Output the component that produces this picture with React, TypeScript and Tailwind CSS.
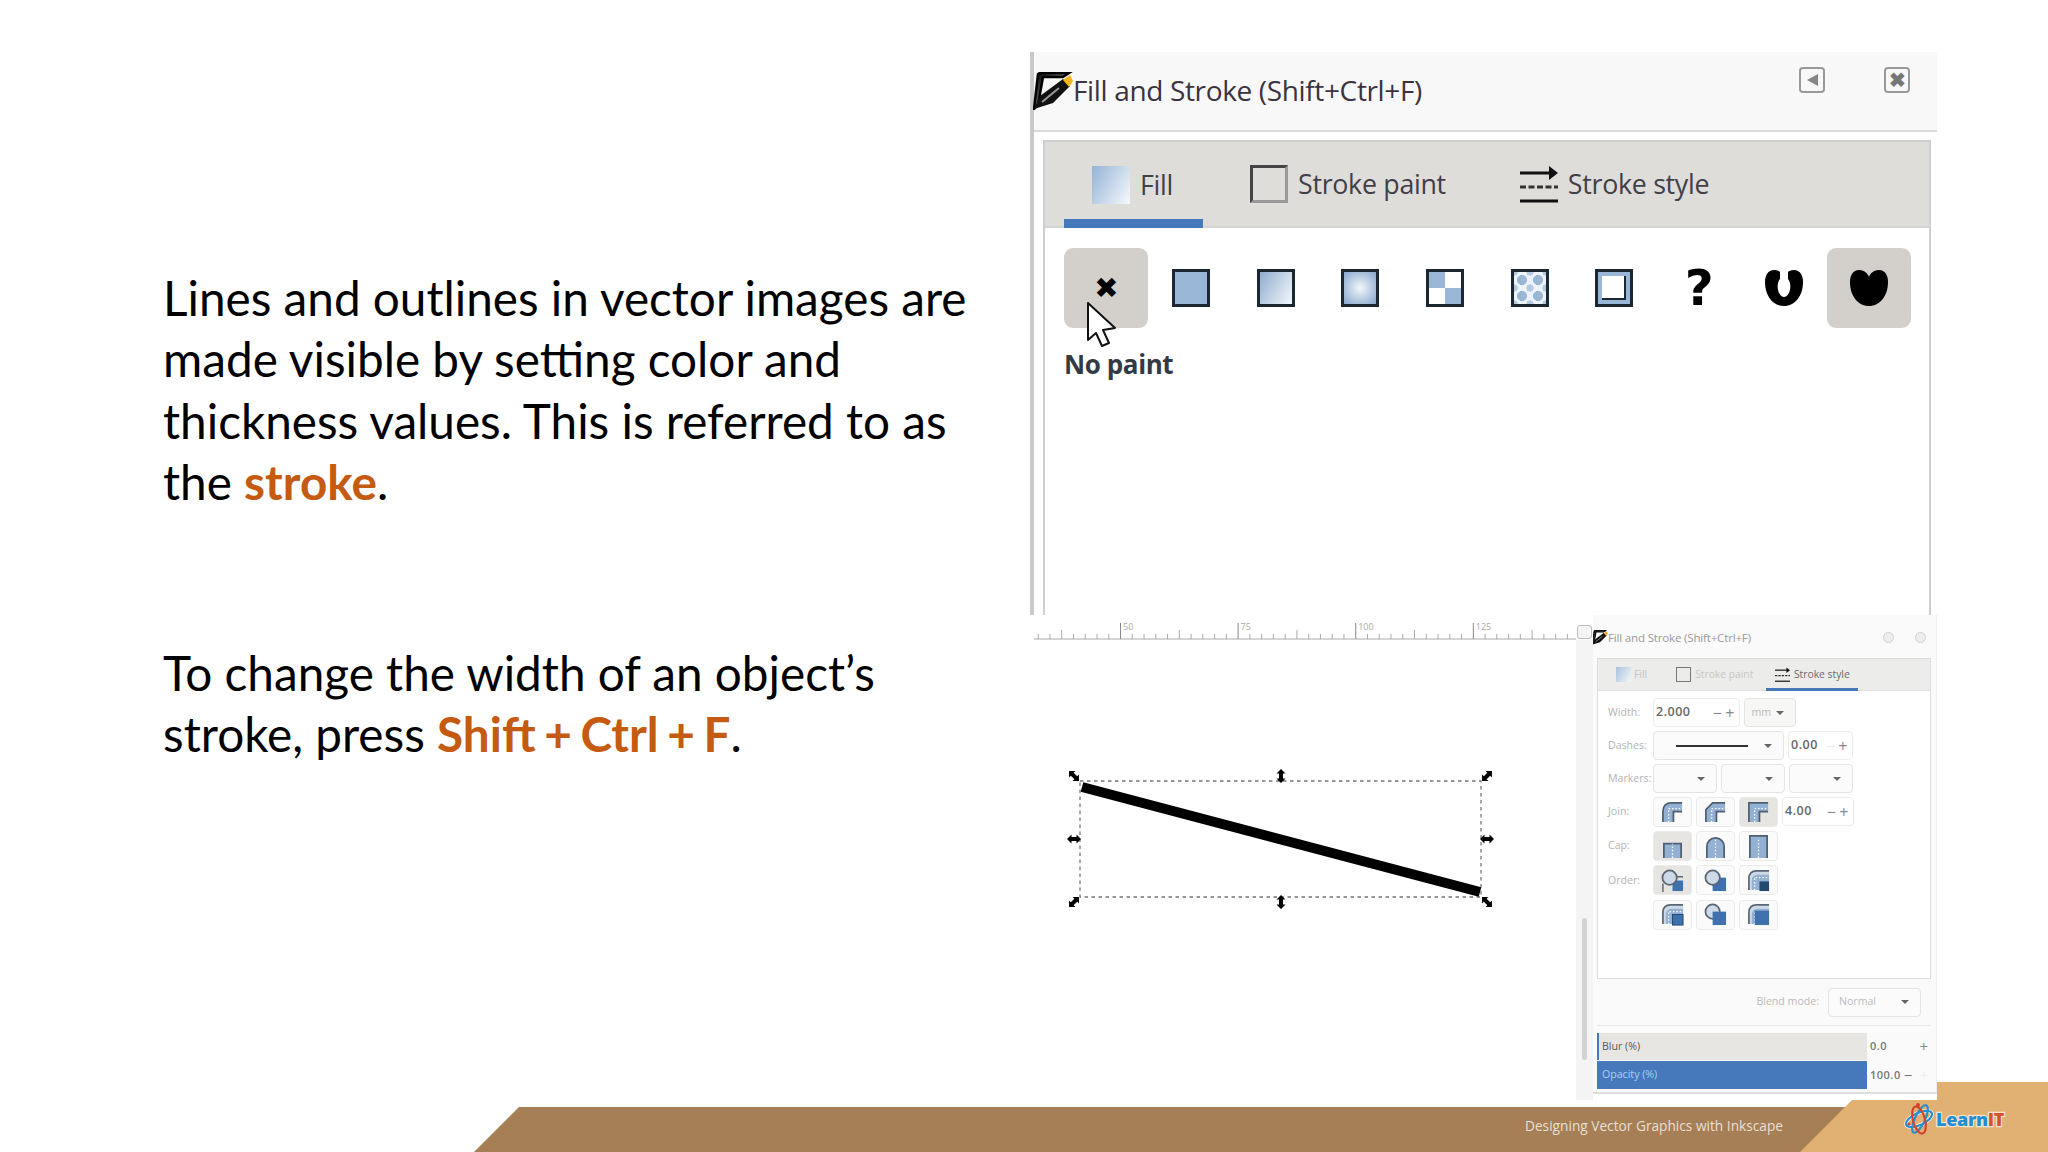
import React from "react";

const sans = "font-['Open_Sans','Noto_Sans',sans-serif]";

function PenIcon({ className }: { className: string }) {
  return (
    <svg viewBox="0 0 40 38" className={className}>
      <defs>
        <linearGradient id="pg" x1="0" y1="0" x2="1" y2="1">
          <stop offset="0" stopColor="#000" />
          <stop offset="0.6" stopColor="#777" />
          <stop offset="1" stopColor="#eee" />
        </linearGradient>
      </defs>
      <path d="M7 1H36L30 5H10L5 33 1 37 5 2Z" fill="url(#pg)" stroke="#000" strokeWidth="2.5" />
      <path d="M1 37 L7 24 L30 7 L37 14 L20 31Z" fill="#111" />
      <path d="M9 30 L26 16" stroke="#999" strokeWidth="2" />
      <path d="M30 8 L37 3 L40 9 L36 15Z" fill="#f2b21c" />
    </svg>
  );
}

function Heart({ open }: { open?: boolean }) {
  return (
    <svg viewBox="0 0 38 38" className="w-[38px] h-[38px]">
      <path d="M9 1C15 1 18 5 19 8C20 5 23 1 29 1C35 1 38 6 38 13C38 27 30 37 19 37C8 37 0 27 0 13C0 6 3 1 9 1Z" fill="#000" />
      {open && <path d="M15 0H23L23 10C27 14 26 27 19 28C12 27 11 14 15 10Z" fill="#fff" />}
    </svg>
  );
}

function Swatch({ kind }: { kind: string }) {
  const box = "w-[38px] h-[38px] border-[3px] border-[#1b2733] ";
  if (kind === "flat") return <div className={box + "bg-[#9ab6d6]"} />;
  if (kind === "linear") return <div className={box + "bg-[linear-gradient(120deg,#8fadd0,#f4f7fb)]"} />;
  if (kind === "radial") return <div className={box + "bg-[radial-gradient(circle,#f2f6fb,#86a6cc)]"} />;
  if (kind === "mesh")
    return (
      <div className={box + "grid grid-cols-2 grid-rows-2 bg-white"}>
        <div className="bg-[#9ab6d6]" />
        <div />
        <div />
        <div className="bg-[#9ab6d6]" />
      </div>
    );
  if (kind === "pattern")
    return (
      <div className={box + "bg-[#eef3f9] bg-[radial-gradient(circle,#9ab6d6_42%,transparent_46%),radial-gradient(circle,#b4c9e1_30%,transparent_34%)] bg-[length:16px_16px] bg-[position:0_0,8px_8px]"} />
    );
  return (
    <div className={box + "bg-[#9ab6d6] p-[4px]"}>
      <div className="w-full h-full bg-white border-r-2 border-b-2 border-[#1b2733]" />
    </div>
  );
}

function Cell({ children, active }: { children: React.ReactNode; active?: boolean }) {
  return (
    <div className="w-[84.7px] h-[80px] flex items-center justify-center">
      <div className={"w-[84px] h-[80px] rounded-[9px] flex items-center justify-center " + (active ? "bg-[#d3d0cc]" : "")}>{children}</div>
    </div>
  );
}

function StrokeStyleIcon({ className }: { className: string }) {
  return (
    <svg viewBox="0 0 38 38" className={className}>
      <path d="M0 8H30" stroke="#111" strokeWidth="3" />
      <path d="M29 1L38 8L29 15Z" fill="#111" />
      <path d="M0 22H38" stroke="#333" strokeWidth="3" strokeDasharray="6 2.5" />
      <path d="M0 36H38" stroke="#111" strokeWidth="3" />
    </svg>
  );
}

function JoinIcon({ kind }: { kind: string }) {
  const o =
    kind === "round" ? "M2 22V11Q2 2 11 2H22" : kind === "bevel" ? "M2 22V9L9 2H22" : "M2 22V2H22";
  return (
    <svg viewBox="0 0 24 24" className="w-[23px] h-[23px]">
      <path d={o + "V11H13V22Z"} fill="#94b0d2" />
      <path d={o + "M22 11H13V22"} fill="none" stroke="#4e5f72" strokeWidth="1.8" />
      <path d="M8 22V8H22" fill="none" stroke="#fff" strokeWidth="1.4" strokeDasharray="1.5 2" />
    </svg>
  );
}

function CapIcon({ kind }: { kind: string }) {
  const o = kind === "butt" ? "M3 24V9H21V24" : kind === "round" ? "M3 24V12A9 9 0 0 1 21 12V24" : "M3 24V1H21V24";
  return (
    <svg viewBox="0 0 24 24" className="w-[23px] h-[23px]">
      <path d={o + "Z"} fill="#94b0d2" />
      <path d={o} fill="none" stroke="#4e5f72" strokeWidth="1.8" />
      <path d={kind === "butt" ? "M12 24V9" : "M12 24V5"} stroke="#fff" strokeWidth="1.4" strokeDasharray="1.5 2" />
    </svg>
  );
}

function OrderIcon({ kind }: { kind: number }) {
  const circle = <circle cx="9" cy="9" r="7.5" fill="#ced9e7" stroke="#5a6673" strokeWidth="1.8" />;
  const rounded = (
    <>
      <path d="M2 22V10Q2 2 10 2H23V22Z" fill="#ced9e7" />
      <path d="M2 22V10Q2 2 10 2H23" fill="none" stroke="#5a6673" strokeWidth="1.8" />
      <path d="M5 22V12Q5 6 12 6H23V22Z" fill="#94b0d2" />
      <path d="M8 22V9H23" fill="none" stroke="#fff" strokeWidth="1.3" strokeDasharray="1.5 2" />
    </>
  );
  return (
    <svg viewBox="0 0 24 24" className="w-[23px] h-[23px]">
      {kind === 0 && (
        <>
          <path d="M2 15V24M14 8H23" stroke="#5a6673" strokeWidth="1.5" />
          <rect x="12" y="12" width="11" height="11" fill="#3f72ad" />
          {circle}
        </>
      )}
      {kind === 1 && (
        <>
          <rect x="9" y="9" width="14" height="14" fill="#3f72ad" />
          {circle}
        </>
      )}
      {kind === 2 && (
        <>
          {rounded}
          <rect x="13" y="13" width="10" height="10" fill="#24486f" />
        </>
      )}
      {kind === 3 && (
        <>
          {rounded}
          <rect x="12" y="12" width="11" height="11" fill="#3f72ad" stroke="#24486f" />
        </>
      )}
      {kind === 4 && (
        <>
          {circle}
          <rect x="9" y="9" width="14" height="14" fill="#3f72ad" />
        </>
      )}
      {kind === 5 && (
        <>
          {rounded}
          <rect x="8" y="8" width="15" height="15" fill="#3f72ad" />
        </>
      )}
    </svg>
  );
}

function Caret() {
  return <span className="w-0 h-0 border-x-[4px] border-x-transparent border-t-[4px] border-t-[#666]" />;
}

function Combo({ className, children }: { className: string; children?: React.ReactNode }) {
  return (
    <div className={"h-[29px] border border-[#e4e4e2] rounded-[4px] flex items-center justify-end pr-[11px] relative " + className}>
      {children}
      <Caret />
    </div>
  );
}

function Entry({ className, value, minus, plus }: { className: string; value: string; minus?: string; plus?: string }) {
  return (
    <div className={"h-[29px] border border-[#ececea] rounded-[4px] bg-white flex items-center justify-between pl-[2px] pr-[4px] text-[12.5px] tracking-[0.5px] text-[#666] font-semibold " + className}>
      <span>{value}</span>
      <span className="flex gap-[3px] text-[16px] font-normal leading-none">
        <span className={minus ?? "text-[#888]"}>−</span>
        <span className={plus ?? "text-[#888]"}>+</span>
      </span>
    </div>
  );
}

function ToggleBtn({ children, active }: { children: React.ReactNode; active?: boolean }) {
  return (
    <div className={"w-[39px] h-[30px] rounded-[4px] border border-[#ecebe9] flex items-center justify-center " + (active ? "bg-[#e6e5e2]" : "bg-[#fbfbfb]")}>{children}</div>
  );
}

function Handle({ x, y, rot }: { x: number; y: number; rot: number }) {
  return (
    <path
      transform={`translate(${x} ${y}) rotate(${rot})`}
      d="M0 -7L4.5 -2.5H2V2.5H4.5L0 7L-4.5 2.5H-2V-2.5H-4.5Z"
      fill="#000"
    />
  );
}

function Ruler() {
  const ticks = Array.from({ length: 47 }, (_, i) => i);
  const labels: [number, string][] = [[90, "50"], [207.6, "75"], [325.2, "100"], [442.8, "125"]];
  return (
    <svg viewBox="0 0 546 26" className="w-[546px] h-[26px] shrink-0">
      <path d="M4 24H546" stroke="#aaa" strokeWidth="1" />
      {ticks.map((i) => {
        const x = 8.2 + i * 11.76;
        const mod = (i + 3) % 10;
        const h = mod === 0 ? 16 : mod === 5 ? 9 : 5;
        return <path key={i} d={`M${x} 24V${24 - h}`} stroke={mod === 0 ? "#888" : "#aaa"} strokeWidth="1" />;
      })}
      {labels.map(([x, t]) => (
        <text key={t} x={x + 3} y="15" fontSize="9" fill="#aaa" fontFamily="Open Sans">
          {t}
        </text>
      ))}
    </svg>
  );
}

function Logo() {
  return (
    <div className="flex items-center">
      <svg viewBox="0 0 32 34" className="w-[32px] h-[34px]">
        <g fill="none" strokeWidth="2.2">
          <ellipse cx="15" cy="17" rx="14" ry="6" stroke="#fff" strokeWidth="3.6" transform="rotate(-25 15 17)" />
          <ellipse cx="15" cy="17" rx="14" ry="6" stroke="#2a8fd0" transform="rotate(-25 15 17)" />
          <ellipse cx="16" cy="17" rx="15" ry="5" stroke="#2a8fd0" transform="rotate(-65 16 17)" />
          <ellipse cx="15" cy="18" rx="6" ry="14" stroke="#d8412f" transform="rotate(-15 15 18)" />
        </g>
        <circle cx="14" cy="3" r="2" fill="#d8412f" />
        <circle cx="5" cy="22" r="1.6" fill="#d8412f" />
      </svg>
      <span className="text-[18px] font-extrabold tracking-[-0.3px] leading-none font-['Open_Sans',sans-serif] [-webkit-text-stroke:2.5px_#f3e2cc] [paint-order:stroke_fill] text-[#1f8fd2]">
        Learn<span className="text-[#d6512f]">IT</span>
      </span>
    </div>
  );
}

export default function App() {
  const fills = ["flat", "linear", "radial", "mesh", "pattern", "swatch"];
  return (
    <div className="relative w-[2048px] h-[1152px] overflow-hidden bg-white flex">
      {/* Footer */}
      <div className="absolute left-[474px] right-0 bottom-0 h-[45px] pb-[6px] bg-[#a67f57] [clip-path:polygon(45px_0,100%_0,100%_100%,0_100%)] flex items-center pl-[1051px]">
        <span className={sans + " text-[13.7px] text-[#e9dfd4]"}>Designing Vector Graphics with Inkscape</span>
      </div>
      <div className="absolute left-[1800px] right-0 bottom-0 h-[70px] bg-[#e0b173] [clip-path:polygon(70px_0,100%_0,100%_100%,0_100%)] flex items-start pl-[104px] pt-[20px]">
        <Logo />
      </div>

      {/* Slide text */}
      <div className="w-[1030px] pl-[163px] pt-[267px] flex flex-col gap-[129px] font-['Lato',sans-serif] text-[47.7px] leading-[61.4px] text-black">
        <p>
          Lines and outlines in vector images are
          <br />
          made visible by setting color and
          <br />
          thickness values. This is referred to as
          <br />
          the <b className="text-[#c55a11]">stroke</b>.
        </p>
        <p>
          To change the width of an object’s
          <br />
          stroke, press <b className="text-[#c55a11] [word-spacing:-3px]">Shift + Ctrl + F</b>.
        </p>
      </div>

      {/* Screenshots */}
      <div className="relative w-[907px] pt-[52px] flex flex-col">
        {/* Upper dialog */}
        <div className={"h-[563px] flex flex-col border-l-[4px] border-[#c9c9c9] bg-white " + sans}>
          <div className="h-[80px] shrink-0 bg-[#f8f8f8] border-b-2 border-[#dadada] flex items-center">
            <PenIcon className="w-[40px] h-[38px] -ml-[1px]" />
            <span className="text-[28px] tracking-[-0.35px] text-[#3b3340] -mt-[2px]">Fill and Stroke (Shift+Ctrl+F)</span>
            <div className="ml-auto flex items-center gap-[59px] pr-[27px] pb-[22px]">
              <div className="w-[26px] h-[26px] border-2 border-[#999] rounded-[4px] flex items-center justify-center">
                <span className="w-0 h-0 border-y-[6px] border-y-transparent border-r-[11px] border-r-[#888]" />
              </div>
              <div className="w-[26px] h-[26px] border-2 border-[#999] rounded-[4px] flex items-center justify-center text-[20px] leading-none font-bold text-[#777]">✖</div>
            </div>
          </div>
          <div className="ml-[9px] mr-[6px] mt-[8px] flex-1 flex flex-col border-x-2 border-t-2 border-[#cfcfcf]">
            <div className="h-[86px] shrink-0 bg-[#dfddda] border-b-2 border-[#d2d2d0] flex pl-[19px] text-[#3f4048] text-[26.8px] tracking-[-0.3px]">
              <div className="w-[139px] h-[86px] -mb-[2px] border-b-[9px] border-t-[9px] border-t-transparent border-[#4679bb] flex items-center pl-[28px] gap-[10px]">
                <div className="w-[38px] h-[38px] bg-[linear-gradient(120deg,#94b2d6,#f6f9fc)]" />
                <span>Fill</span>
              </div>
              <div className="ml-[47px] flex items-center gap-[10px]">
                <div className="w-[38px] h-[38px] border-[3px] border-[#444] bg-[#dfddda] [border-bottom-color:#999] [border-right-color:#999]" />
                <span>Stroke paint</span>
              </div>
              <div className="ml-[74px] flex items-center gap-[10px]">
                <StrokeStyleIcon className="w-[38px] h-[38px]" />
                <span>Stroke style</span>
              </div>
            </div>
            <div className="relative flex-1 bg-white pl-[19px] pt-[20px]">
              <div className="flex">
                <Cell active>
                  <span className="text-[29px] leading-none font-bold font-['DejaVu_Sans',sans-serif] text-black">✖</span>
                </Cell>
                {fills.map((f) => (
                  <Cell key={f}>
                    <Swatch kind={f} />
                  </Cell>
                ))}
                <Cell>
                  <span className="text-[50px] leading-none font-bold font-['DejaVu_Sans',sans-serif] text-black">?</span>
                </Cell>
                <Cell>
                  <Heart open />
                </Cell>
                <Cell active>
                  <Heart />
                </Cell>
              </div>
              <p className="mt-[19px] text-[26px] leading-[34px] font-bold tracking-[-0.4px] text-[#333a44]">No paint</p>
              <svg viewBox="0 0 30 46" className="absolute left-[42px] top-[74px] w-[30px] h-[46px]">
                <path d="M1 1V38L9 31L15 44L22 41L16 28L28 26Z" fill="#fff" stroke="#111" strokeWidth="2" strokeLinejoin="round" />
              </svg>
            </div>
          </div>
        </div>

        {/* Lower picture */}
        <div className="h-[485px] flex bg-white">
          <div className="w-[546px] shrink-0 flex flex-col overflow-hidden">
            <Ruler />
            <svg viewBox="0 0 546 459" className="w-[546px] h-[459px]">
              <rect x="50" y="140" width="401" height="116" fill="none" stroke="#777" strokeWidth="1.3" strokeDasharray="3.5 3.5" />
              <path d="M52 146L450 251" stroke="#000" strokeWidth="10" />
              <Handle x={44} y={135} rot={-45} />
              <Handle x={457} y={135} rot={45} />
              <Handle x={44} y={261} rot={45} />
              <Handle x={457} y={261} rot={-45} />
              <Handle x={251} y={135} rot={0} />
              <Handle x={251} y={261} rot={0} />
              <Handle x={44} y={198} rot={90} />
              <Handle x={457} y={198} rot={90} />
            </svg>
          </div>
          <div className="relative w-[17px] shrink-0 bg-[linear-gradient(#fff_25px,#f4f4f4_25px)] flex flex-col items-center pt-[303px]">
            <div className="absolute left-[1px] top-[10px] w-[15px] h-[14px] border border-[#bbb] rounded-[3px] bg-[#f4f4f4]" />
            <div className="w-[5px] h-[142px] bg-[#d2d2d2] rounded-full" />
          </div>
          <div className="flex-1 bg-[#fafafa] flex flex-col border-b-2 border-[#dedede] border-r border-r-[#ededed] mb-[6px] pl-[4px] pr-[5px]">
            <div className="h-[43px] shrink-0 flex items-center -ml-[5px] pt-[2px]">
              <PenIcon className="w-[16px] h-[15px]" />
              <span className={sans + " text-[11.6px] tracking-[-0.2px] text-[#9a9a9a]"}>Fill and Stroke (Shift+Ctrl+F)</span>
              <div className="ml-auto flex gap-[21px] pr-[5px]">
                <span className="w-[11px] h-[11px] rounded-full border border-[#cfcfcf] bg-[#eee]" />
                <span className="w-[11px] h-[11px] rounded-full border border-[#cfcfcf] bg-[#eee]" />
              </div>
            </div>
            <div className={"h-[321px] shrink-0 border border-[#dcdcdc] bg-white flex flex-col " + sans}>
              <div className="h-[32px] shrink-0 bg-[#ececea] border-b border-[#dedede] flex text-[10.3px]">
                <div className="ml-[18px] flex items-center gap-[3px] text-[#c4c4c4]">
                  <div className="w-[15px] h-[15px] bg-[linear-gradient(120deg,#a8c0dc,#f4f7fb)]" />
                  Fill
                </div>
                <div className="ml-[29px] flex items-center gap-[4px] text-[#c8c8c8]">
                  <div className="w-[15px] h-[15px] border border-[#777]" />
                  Stroke paint
                </div>
                <div className="ml-[13px] w-[92px] -mb-px border-b-[3px] border-[#4679bb] flex items-center justify-center gap-[4px] text-[#6a6a6a] pt-[2px]">
                  <StrokeStyleIcon className="w-[15px] h-[15px]" />
                  Stroke style
                </div>
              </div>
              <div className="pl-[10px] pt-[7px] grid grid-cols-[45px_auto] gap-y-[4.1px] items-center justify-start text-[10.6px] text-[#b3b3b3]">
                <span>Width:</span>
                <div className="flex gap-[4px]">
                  <Entry className="w-[87px]" value="2.000" />
                  <Combo className="w-[52px] bg-[#f7f7f6] text-[#bbb]">
                    <span className="mr-[5px]">mm</span>
                  </Combo>
                </div>
                <span>Dashes:</span>
                <div className="flex gap-[4px]">
                  <Combo className="w-[131px] bg-[#fbfbfb]">
                    <span className="absolute left-[22px] w-[72px] h-[2px] bg-[#333]" />
                  </Combo>
                  <Entry className="w-[65px]" value="0.00" minus="text-[#eee]" />
                </div>
                <span>Markers:</span>
                <div className="flex gap-[4px]">
                  <Combo className="w-[64px] bg-[#fbfbfb]" />
                  <Combo className="w-[64px] bg-[#fbfbfb]" />
                  <Combo className="w-[64px] bg-[#fbfbfb]" />
                </div>
                <span>Join:</span>
                <div className="flex gap-[4px]">
                  <ToggleBtn><JoinIcon kind="round" /></ToggleBtn>
                  <ToggleBtn><JoinIcon kind="bevel" /></ToggleBtn>
                  <ToggleBtn active><JoinIcon kind="miter" /></ToggleBtn>
                  <Entry className="w-[72px]" value="4.00" />
                </div>
                <span>Cap:</span>
                <div className="flex gap-[4px]">
                  <ToggleBtn active><CapIcon kind="butt" /></ToggleBtn>
                  <ToggleBtn><CapIcon kind="round" /></ToggleBtn>
                  <ToggleBtn><CapIcon kind="square" /></ToggleBtn>
                </div>
                <span>Order:</span>
                <div className="flex gap-[4px]">
                  <ToggleBtn active><OrderIcon kind={0} /></ToggleBtn>
                  <ToggleBtn><OrderIcon kind={1} /></ToggleBtn>
                  <ToggleBtn><OrderIcon kind={2} /></ToggleBtn>
                </div>
                <span />
                <div className="flex gap-[4px]">
                  <ToggleBtn><OrderIcon kind={3} /></ToggleBtn>
                  <ToggleBtn><OrderIcon kind={4} /></ToggleBtn>
                  <ToggleBtn><OrderIcon kind={5} /></ToggleBtn>
                </div>
              </div>
            </div>
            <div className={"flex flex-col flex-1 " + sans}>
              <div className="h-[47px] shrink-0 border-b border-[#eaeaea] flex items-center justify-end gap-[9px] pr-[10px] text-[10.6px] text-[#bbb]">
                <span>Blend mode:</span>
                <Combo className="w-[93px] bg-[#fbfbfb]">
                  <span className="absolute left-[10px] text-[#bbb]">Normal</span>
                </Combo>
              </div>
              <div className="pt-[7px] flex flex-col gap-[1px] text-[10.6px]">
                <div className="flex h-[27px] items-center">
                  <div className="w-[270px] h-full bg-[#e8e6e3] border-l-2 border-[#4679bb] flex items-center pl-[3px] text-[#5a5a5a]">Blur (%)</div>
                  <span className="ml-[3px] text-[11px] font-semibold text-[#777] tracking-[0.5px]">0.0</span>
                  <span className="ml-auto mr-[3px] text-[15px] leading-none text-[#888]">+</span>
                </div>
                <div className="flex h-[28px] items-center">
                  <div className="w-[270px] h-full bg-[#4679bb] flex items-center pl-[5px] text-[#a9cdf6]">Opacity (%)</div>
                  <span className="ml-[3px] text-[11px] font-semibold text-[#777] tracking-[0.5px]">100.0</span>
                  <span className="ml-[3px] text-[15px] leading-none text-[#777]">−</span>
                  <span className="ml-auto mr-[3px] text-[15px] leading-none text-[#eee]">+</span>
                </div>
              </div>
            </div>
          </div>
        </div>
      </div>
    </div>
  );
}
